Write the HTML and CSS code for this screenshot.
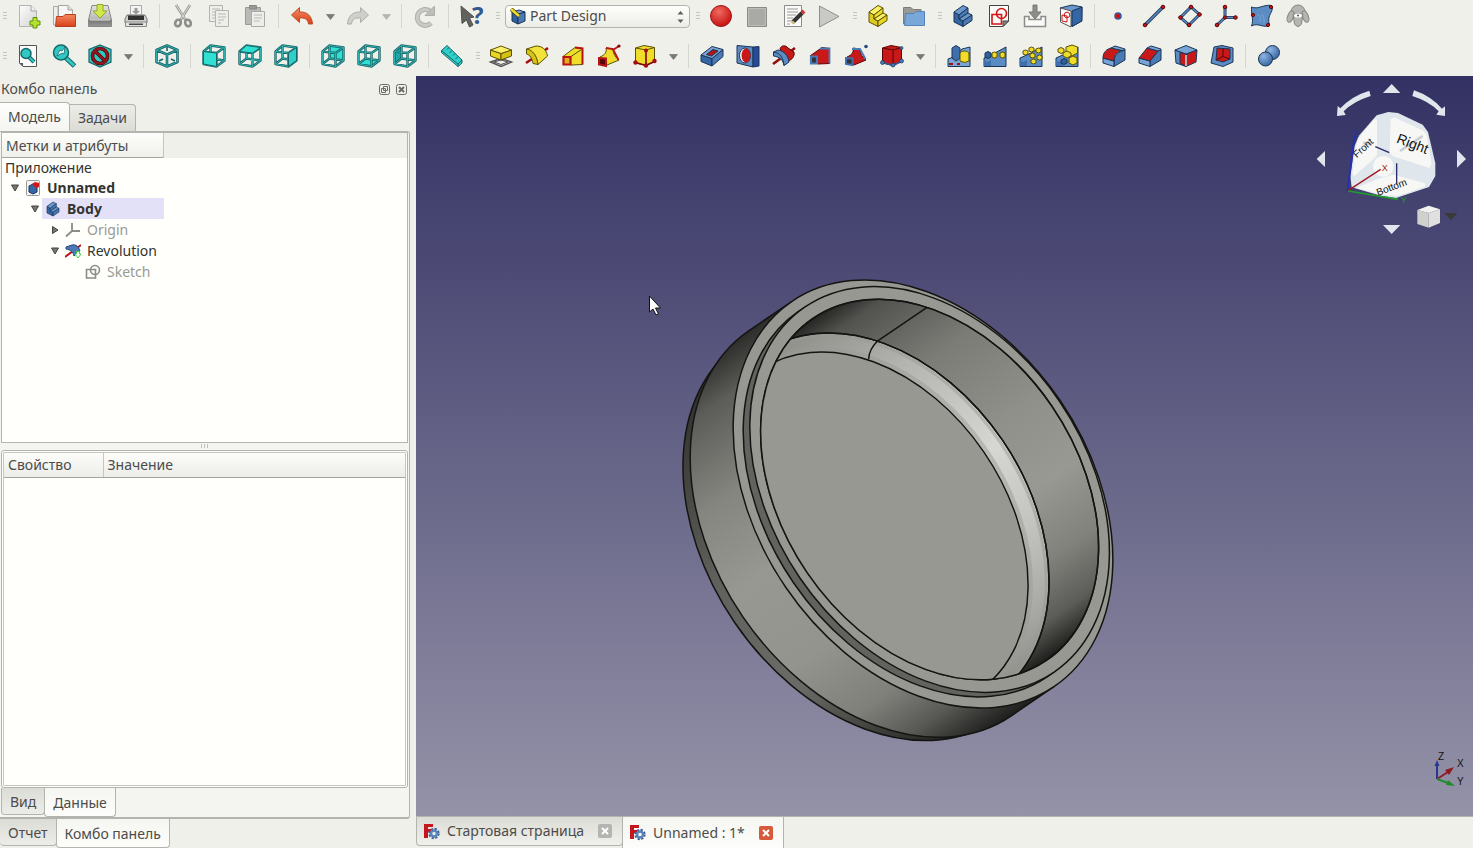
FILE: index.html
```html
<!DOCTYPE html>
<html lang="ru">
<head>
    <meta charset="UTF-8">
    <meta name="viewport" content="width=device-width, initial-scale=1.0">
    <title>FreeCAD</title>
    <link rel="stylesheet" href="styles.css">
</head>
<body>
    <!-- Shared icon shapes -->
    <svg class="defs" aria-hidden="true">
        <defs>
            <linearGradient id="paper" x1="0" y1="0" x2="1" y2="1"><stop offset="0" stop-color="#fdfdfd"/><stop offset="1" stop-color="#d3d3d0"/></linearGradient>
            <linearGradient id="orange" x1="0" y1="0" x2="0" y2="1"><stop offset="0" stop-color="#f58a60"/><stop offset="1" stop-color="#d8401a"/></linearGradient>
            <linearGradient id="drive" x1="0" y1="0" x2="0" y2="1"><stop offset="0" stop-color="#e4e4e2"/><stop offset=".65" stop-color="#b8b8b6"/><stop offset=".72" stop-color="#777"/><stop offset="1" stop-color="#999"/></linearGradient>
            <radialGradient id="ball" cx=".4" cy=".3" r=".7"><stop offset="0" stop-color="#f06a60"/><stop offset="1" stop-color="#c81212"/></radialGradient>
            <radialGradient id="blueball" cx=".35" cy=".3" r=".8"><stop offset="0" stop-color="#8fb6e2"/><stop offset="1" stop-color="#2f5f9c"/></radialGradient>
        </defs>
        <symbol id="wire" viewBox="0 0 24 24">
            <g fill="none" stroke-linejoin="round">
                <path d="M1.5 7.5 14.5 9V22.5L1.5 20ZM8.5 1.5 22.5 3.5V16.5L8.5 14.5ZM1.5 7.5 8.5 1.5M14.5 9 22.5 3.5M14.5 22.5 22.5 16.5M1.5 20 8.5 14.5" stroke="#17666a" stroke-width="2.4"/>
                <path d="M1.5 7.5 14.5 9V22.5L1.5 20ZM8.5 1.5 22.5 3.5V16.5L8.5 14.5ZM1.5 7.5 8.5 1.5M14.5 9 22.5 3.5M14.5 22.5 22.5 16.5M1.5 20 8.5 14.5" stroke="#2fb0ac" stroke-width="1"/>
            </g>
        </symbol>
        <symbol id="body" viewBox="0 0 24 24">
            <g stroke="#1a3557" stroke-linejoin="round">
                <path d="M3 8 8 11V15L12 17V22.5L3 18Z" fill="#3465a4"/>
                <path d="M3 8 12 1.5 17 4 8 11Z" fill="#6a98cb"/>
                <path d="M8 11 17 4V9L8 15Z" fill="#4a7ab4"/>
                <path d="M8 15 17 9 21 11 12 17Z" fill="#6a98cb"/>
                <path d="M12 17 21 11V16.5L12 22.5Z" fill="#4a7ab4"/>
            </g>
        </symbol>
        <symbol id="partyellow" viewBox="0 0 24 24">
            <g stroke="#5c5100" stroke-linejoin="round">
                <path d="M3 8 8 11V15L12 17V22.5L3 18Z" fill="#e0cb1c"/>
                <path d="M3 8 12 1.5 17 4 8 11Z" fill="#fbf06a"/>
                <path d="M8 11 17 4V9L8 15Z" fill="#f0dd2b"/>
                <path d="M8 15 17 9 21 11 12 17Z" fill="#fbf06a"/>
                <path d="M12 17 21 11V16.5L12 22.5Z" fill="#e8d423"/>
            </g>
        </symbol>
        <symbol id="cad" viewBox="0 0 17 17">
            <g fill="#c4161c">
                <rect x="1" y="1" width="4" height="14"/><rect x="5" y="1" width="5" height="3"/><rect x="5" y="6" width="3" height="3"/>
            </g>
            <circle cx="11" cy="10.5" r="4.2" fill="none" stroke="#3c5f95" stroke-width="3" stroke-dasharray="2 1.3"/>
            <circle cx="11" cy="10.5" r="3" fill="none" stroke="#5b83bb" stroke-width="2.5"/>
        </symbol>
        <symbol id="boxes" viewBox="0 0 24 24">
            <path d="M1 14 10 10 23 3V22.5H1Z" fill="#5c8cc4" stroke="#1a3557"/>
            <path d="M1 16 4 18 8 16V22H1Z" fill="#3f70ad"/>
        </symbol>
        <symbol id="down" viewBox="0 0 9 6"><path d="M.5 .5H8.5L4.5 5.5Z" fill="#7a7a76" stroke="#5d5d59" stroke-width=".5"/></symbol>
    </svg>

    <header class="toolbars">
        <div class="toolbar-row">
            <div class="toolbar">
                <span class="handle"></span>
                <button class="tool" aria-label="Создать"><svg viewBox="0 0 24 24"><path d="M3.5 1.5H15L20.5 7V22.5H3.5Z" fill="url(#paper)" stroke="#b4b4b0"/><path d="M15 1.5V7H20.5" fill="#eee" stroke="#a5a5a1"/><path d="M17 13.5H21V17H24V21H21V24H17V21H14V17H17Z" fill="#b6e32b" stroke="#5d8f09"/></svg></button>
                <button class="tool" aria-label="Открыть"><svg viewBox="0 0 24 24"><path d="M1.5 2.5H6V21H1.5Z" fill="#eee" stroke="#aaa"/><path d="M6.5 1.5H16L20.5 6V14H6.5Z" fill="#f6f6f4" stroke="#a5a5a1"/><path d="M16 1.5V6H20.5" fill="#ddd" stroke="#a5a5a1"/><path d="M4.5 12.5H11L13 10.5H23.5V22.5H3.5Z" fill="url(#orange)" stroke="#b8401d"/></svg></button>
                <button class="tool" aria-label="Сохранить"><svg viewBox="0 0 24 24"><path d="M4 1.5H20L23.5 16V22.5H.5V16Z" fill="url(#drive)" stroke="#888"/><path d="M2 16H22" stroke="#ddd"/><path d="M9 .5H15V7H19L12 14 5 7H9Z" fill="#cfe84a" stroke="#9aa828"/></svg></button>
                <button class="tool" aria-label="Печать"><svg viewBox="0 0 24 24"><path d="M6.5 1.5H17.5V12H6.5Z" fill="#f3f3f1" stroke="#aaa"/><path d="M10.5 4H13.5V7H16L12 10.5 8 7H10.5Z" fill="#999"/><path d="M3 11H21L23 15V19H1V15Z" fill="#d0d0ce" stroke="#777"/><path d="M4 11.5H20V16H4Z" fill="#333"/><path d="M1.500 18H22.500V22.500H1.500Z" fill="#e4e4e2" stroke="#888"/><path d="M5 19.500H19V21H5Z" fill="#444"/></svg></button>
                <span class="sep"></span>
                <button class="tool" aria-label="Вырезать"><svg viewBox="0 0 24 24"><path d="M5 1 14.5 16M19 1 9.5 16" stroke="#9a9a97" stroke-width="2.600"/><path d="M5 1 14 15M19 1 10 15" stroke="#dadad7"/><g fill="none" stroke="#8d8d8a" stroke-width="2.600"><ellipse cx="7" cy="19" rx="2.700" ry="3.400" transform="rotate(25 7 19)"/><ellipse cx="17" cy="19" rx="2.700" ry="3.400" transform="rotate(-25 17 19)"/></g></svg></button>
                <button class="tool" aria-label="Копировать"><svg viewBox="0 0 24 24"><g fill="#ededea" stroke="#b3b3af"><path d="M2.5 1.5H15.5V17.5H2.5Z"/><path d="M8.5 6.5H21.5V22.5H8.5Z"/></g><path d="M5 5H13M5 8H8M5 11H8M5 14H8M11 10H19M11 13H19M11 16H17M11 19H14" stroke="#b9b9b5"/></svg></button>
                <button class="tool" aria-label="Вставить"><svg viewBox="0 0 24 24"><path d="M2.5 3.5H17.5V20.5H2.5Z" fill="#b9b9b6" stroke="#9b9b98"/><path d="M6.5 1.5H13.5V5H6.5Z" fill="#999" stroke="#888"/><path d="M8.5 7.5H21.5V22.5H8.5Z" fill="#ededea" stroke="#aaa"/><path d="M11 11H19M11 14H19M11 17H17" stroke="#b9b9b5"/></svg></button>
                <span class="sep"></span>
                <button class="tool" aria-label="Отменить"><svg viewBox="0 0 24 24"><path d="M1.5 11 9.5 3.5V8C17 7.5 22 12 22.5 20H18.5C18 15 14.5 13.5 9.5 14V18.5Z" fill="url(#orange)" stroke="#bd4d28"/></svg></button>
                <button class="drop" aria-label="Список отмен"><svg><use href="#down"/></svg></button>
                <button class="tool" aria-label="Повторить"><svg viewBox="0 0 24 24"><path d="M22.5 11 14.5 3.5V8C7 7.5 2 12 1.5 20H5.5C6 15 9.5 13.5 14.5 14V18.5Z" fill="#cfcfcb" stroke="#adada9"/></svg></button>
                <button class="drop faded" aria-label="Список повторов"><svg><use href="#down"/></svg></button>
                <span class="sep"></span>
                <button class="tool" aria-label="Обновить"><svg viewBox="0 0 24 24"><path d="M18 19A8 8 0 1 1 17 7" fill="none" stroke="#aeaeaa" stroke-width="5"/><path d="M18 19A8 8 0 1 1 17 7" fill="none" stroke="#c9c9c5" stroke-width="3"/><path d="M21.500 2V11.500H12Z" fill="#bdbdb9" stroke="#aeaeaa"/></svg></button>
                <span class="sep"></span>
                <button class="tool" aria-label="Что это?"><svg viewBox="0 0 24 24"><path d="M1 2 14 13 9.5 14 13 21 9.5 23 6.5 16 2 19.5Z" fill="#61615e" stroke="#50504e"/><text x="12" y="20" class="qmark">?</text></svg></button>
            </div>
            <div class="toolbar">
                <span class="handle"></span>
                <div class="workbench">
                    <svg class="wb-icon" viewBox="0 0 17 17"><path d="M2 4 8 6V16L2 13Z" fill="#2f5f9c" stroke="#1a3557"/><path d="M8 6 15 4V13L8 16Z" fill="#4a7ab4" stroke="#1a3557"/><path d="M2 4 9 2 15 4 8 6Z" fill="#79a5d6" stroke="#1a3557"/><path d="M1 1 9 8" stroke="#4d4300" stroke-width="4"/><path d="M1 1 9 8" stroke="#f0dd2b" stroke-width="2.500"/></svg>
                    <select aria-label="Верстак"><option>Part Design</option></select>
                    <svg class="wb-arrows" viewBox="0 0 7 12"><path d="M.5 3.5 3.5 0 6.5 3.5ZM.5 8.5 3.5 12 6.5 8.5Z" fill="#5d5d59"/></svg>
                </div>
            </div>
            <div class="toolbar">
                <span class="handle"></span>
                <button class="tool" aria-label="Запись макроса"><svg viewBox="0 0 24 24"><circle cx="12" cy="12" r="10.500" fill="url(#ball)" stroke="#9e1414"/></svg></button>
                <button class="tool" aria-label="Остановить запись"><svg viewBox="0 0 24 24"><path d="M2.5 3.5H21.5V22.5H2.5Z" fill="#a9a9a6" stroke="#8b8b88"/><path d="M3.5 4.5H20.5V21.5H3.5Z" fill="none" stroke="#bdbdba"/></svg></button>
                <button class="tool" aria-label="Макросы"><svg viewBox="0 0 24 24"><path d="M3.5 1.5H20.5V22.5H3.5Z" fill="#fafaf8" stroke="#8b8b88"/><path d="M6 5H17M6 8H17M6 11H15M6 14H12M6 17H11M6 20H9" stroke="#999"/><path d="M12 18 21 9" stroke="#333" stroke-width="4"/><path d="M21 9 23 7" stroke="#c33" stroke-width="4"/><path d="M11 19.500 13 17.500" stroke="#d8b878" stroke-width="3"/></svg></button>
                <button class="tool" aria-label="Выполнить макрос"><svg viewBox="0 0 24 24"><path d="M2.5 2 22 12.5 2.5 23Z" fill="#c9c9c6" stroke="#8f8f8c"/></svg></button>
            </div>
            <div class="toolbar">
                <span class="handle"></span>
                <button class="tool" aria-label="Создать деталь"><svg><use href="#partyellow"/></svg></button>
                <button class="tool" aria-label="Создать группу"><svg viewBox="0 0 24 24"><path d="M1.5 3.5H9L11 5.5H19V20H1.5Z" fill="#999996" stroke="#7c7c79"/><path d="M3.5 9.5H12L14 7.5H22.5V21.5H2.5Z" fill="#7aa7d9" stroke="#5683b8"/></svg></button>
            </div>
            <div class="toolbar">
                <span class="handle"></span>
                <button class="tool" aria-label="Создать тело"><svg><use href="#body"/></svg></button>
                <button class="tool" aria-label="Создать эскиз"><svg viewBox="0 0 24 24"><path d="M2.5 1.5H21.5V17L16 22.5H2.5Z" fill="#fafaf8" stroke="#444"/><path d="M16 22.5V17H21.5Z" fill="#888" stroke="#444"/><g fill="none" stroke="#d31616" stroke-width="1.600"><path d="M5 10.500H14.500V20H5Z"/><circle cx="14.500" cy="9.500" r="5"/></g></svg></button>
                <button class="tool" aria-label="Закрепить эскиз"><svg viewBox="0 0 24 24"><path d="M1.5 12.5H6V15.500H18V12.5H22.5V22.5H1.5Z" fill="#fafaf8" stroke="#8d8d8a" stroke-width="1.500"/><path d="M10 1H14V8H18L12 15 6 8H10Z" fill="#8d8d8a" stroke="#777"/></svg></button>
                <button class="tool" aria-label="Проверить эскиз"><svg viewBox="0 0 24 24"><path d="M1 4 13 1 23 3 22.5 17 13 22.5Z" fill="#6a98cb" stroke="#1a3557"/><path d="M13 7 23 3V17L13 22.5Z" fill="#3465a4" stroke="#1a3557"/><path d="M1.5 4 12 7V23L1.5 18Z" fill="#fafaf8" stroke="#555"/><g fill="none" stroke="#d31616"><path d="M3 11 8 12V18L3 17Z"/><circle cx="8" cy="11" r="2.800"/></g></svg></button>
                <span class="sep"></span>
                <button class="tool" aria-label="Точка"><svg viewBox="0 0 24 24"><circle cx="12" cy="12" r="3" fill="#cc1414" stroke="#3a5a9a" stroke-width="1.600"/></svg></button>
                <button class="tool" aria-label="Линия"><svg viewBox="0 0 24 24"><path d="M3 21 21 3" stroke="#1a3557" stroke-width="3.200"/><path d="M3 21 21 3" stroke="#5c8cc4" stroke-width="1.600"/><g fill="#cc1414" stroke="#5a0505"><circle cx="3" cy="21" r="1.800"/><circle cx="21" cy="3" r="1.800"/></g></svg></button>
                <button class="tool" aria-label="Плоскость"><svg viewBox="0 0 24 24"><path d="M13 3 21.500 10.500 11 21 2.500 13.500Z" fill="none" stroke="#1a3557" stroke-width="3"/><path d="M13 3 21.500 10.500 11 21 2.500 13.500Z" fill="none" stroke="#5c8cc4" stroke-width="1.400"/><g fill="#cc1414" stroke="#5a0505"><circle cx="13" cy="3" r="1.800"/><circle cx="21.500" cy="10.500" r="1.800"/><circle cx="11" cy="21" r="1.800"/><circle cx="2.500" cy="13.500" r="1.800"/></g></svg></button>
                <button class="tool" aria-label="Система координат"><svg viewBox="0 0 24 24"><path d="M11 3V13.500H21M11 13.500 3 21" fill="none" stroke="#1a3557" stroke-width="3"/><path d="M11 3V13.500H21M11 13.500 3 21" fill="none" stroke="#5c8cc4" stroke-width="1.400"/><g fill="#cc1414" stroke="#5a0505"><circle cx="11" cy="3" r="1.800"/><circle cx="11" cy="13.500" r="1.600"/><circle cx="21.500" cy="13.500" r="1.800"/><circle cx="3" cy="21" r="1.800"/></g></svg></button>
                <button class="tool" aria-label="Связующая форма"><svg viewBox="0 0 24 24"><path d="M1.500 3C8 6 14 0 21.500 1.500 25 8 16 10 19.500 21 14 25 8 18 1.500 22 4 16 1 10 1.500 3Z" fill="#5c8cc4" stroke="#1a3557"/><path d="M8 10Q12 13 10 18M12 10Q15 14 14 19" fill="none" stroke="#79a5d6"/><g fill="#cc1414" stroke="#5a0505"><circle cx="21" cy="3" r="1.600"/><circle cx="3" cy="11" r="1.600"/><circle cx="18" cy="21" r="1.600"/></g></svg></button>
                <button class="tool" aria-label="Клонировать"><svg viewBox="0 0 24 24"><g fill="#b4b4b1" stroke="#858582"><circle cx="12" cy="8" r="7"/><ellipse cx="4.500" cy="12.500" rx="2.800" ry="6" transform="rotate(20 4.500 12.500)"/><ellipse cx="19.500" cy="12.500" rx="2.800" ry="6" transform="rotate(-20 19.500 12.500)"/><path d="M7 10H17L15.500 20Q12 25 8.500 20Z"/></g><ellipse cx="12" cy="11.500" rx="3.800" ry="2" fill="#fff"/><circle cx="12" cy="11.500" r="1" fill="#555"/></svg></button>
            </div>
        </div>

        <div class="toolbar-row">
            <div class="toolbar">
                <span class="handle"></span>
                <button class="tool" aria-label="Показать всё"><svg viewBox="0 0 24 24"><path d="M3.5 1.5H20.5V22.5H7L3.5 19Z" fill="#fafaf8" stroke="#555"/><path d="M3.5 19H7V22.5Z" fill="#555"/><path d="M13 13 18 18" stroke="#17666a" stroke-width="4"/><path d="M13 13 18 18" stroke="#2fc9c2" stroke-width="2"/><circle cx="10" cy="9.500" r="5" fill="#2fc9c2" stroke="#17666a" stroke-width="1.500"/></svg></button>
                <button class="tool" aria-label="Показать выделенное"><svg viewBox="0 0 24 24"><path d="M13 13 22.500 22" stroke="#17666a" stroke-width="5"/><path d="M13 13 22 21.500" stroke="#2fc9c2" stroke-width="3"/><circle cx="9" cy="8.500" r="7.500" fill="#2fc9c2" stroke="#17666a" stroke-width="1.500"/><path d="M5 12 8 6 10 7 13 3 12 10 10 9Z" fill="#fff" stroke="#17666a" stroke-width=".8"/></svg></button>
                <button class="tool" aria-label="Стиль отображения"><svg viewBox="0 0 24 24"><path d="M12 1 23 5.500V18L12 23 1 18V5.500Z" fill="#2fc9c2" stroke="#17666a" stroke-width="1.200"/><circle cx="12" cy="12" r="7.500" fill="none" stroke="#3f0308" stroke-width="3.600"/><path d="M7 7 17 17" stroke="#3f0308" stroke-width="3.600"/><circle cx="12" cy="12" r="7.500" fill="none" stroke="#96141c" stroke-width="2.400"/><path d="M7 7 17 17" stroke="#96141c" stroke-width="2.400"/></svg></button>
                <button class="drop" aria-label="Стили"><svg><use href="#down"/></svg></button>
                <span class="sep"></span>
                <button class="tool" aria-label="Изометрия"><svg viewBox="0 0 24 24"><g fill="none" stroke-linejoin="round"><path d="M12 1.500 22.500 6V18L12 22.500 1.500 18V6ZM1.500 6 12 10.500 22.500 6M12 10.500V22.500" stroke="#17666a" stroke-width="2.600"/><path d="M12 3V7M4 17 8 15M20 17 16 15" stroke="#17666a" stroke-width="1.600"/><path d="M12 1.500 22.500 6V18L12 22.500 1.500 18V6ZM1.500 6 12 10.500 22.500 6M12 10.500V22.500" stroke="#2fb0ac"/></g></svg></button>
                <span class="sep"></span>
                <button class="tool" aria-label="Спереди"><svg viewBox="0 0 24 24"><use href="#wire"/><path d="M1.5 7.5 14.5 9V22.5L1.5 20Z" fill="#2fe0d3" stroke="#17666a"/></svg></button>
                <button class="tool" aria-label="Сверху"><svg viewBox="0 0 24 24"><use href="#wire"/><path d="M1.5 7.5 8.5 1.5 22.5 3.5 14.5 9Z" fill="#2fe0d3" stroke="#17666a"/></svg></button>
                <button class="tool" aria-label="Справа"><svg viewBox="0 0 24 24"><use href="#wire"/><path d="M14.5 9 22.5 3.5V16.5L14.5 22.5Z" fill="#2fd0c8" stroke="#17666a"/></svg></button>
                <span class="sep"></span>
                <button class="tool" aria-label="Сзади"><svg viewBox="0 0 24 24"><path d="M8.5 1.5 22.5 3.5V16.5L8.5 14.5Z" fill="#2fe0d3"/><use href="#wire"/></svg></button>
                <button class="tool" aria-label="Снизу"><svg viewBox="0 0 24 24"><path d="M1.5 20 8.5 14.5 22.5 16.5 14.5 22.5Z" fill="#2fe0d3"/><use href="#wire"/></svg></button>
                <button class="tool" aria-label="Слева"><svg viewBox="0 0 24 24"><path d="M1.5 7.5 8.5 1.5V14.5L1.5 20Z" fill="#22a8a4"/><use href="#wire"/></svg></button>
                <span class="sep"></span>
                <button class="tool" aria-label="Измерить"><svg viewBox="0 0 24 24"><path d="M1.500 6.500 7 1.500 22 16V19L18 22.500 1.500 8.500Z" fill="#2fd0c8" stroke="#17666a"/><path d="M1.500 6.500 18 20 22 16M18 20V22.500" fill="none" stroke="#17666a"/><path d="M9 3.500 7 5.500M12 6.500 9.500 9M15 9.500 13 11.500M18 12.500 15.500 15" stroke="#17666a"/></svg></button>
            </div>
            <div class="toolbar">
                <span class="handle"></span>
                <button class="tool" aria-label="Выдавливание"><svg viewBox="0 0 24 24"><path d="M1.500 18 12 14.500 22.500 18 12 22.500Z" fill="#ddd" stroke="#555" stroke-width="1.400"/><path d="M5 18 12 16 19 18 12 20.500Z" fill="#f0f0eb" stroke="#555"/><path d="M1.500 6 12 9.500V16L1.500 12Z" fill="#e8d423" stroke="#5c5100"/><path d="M12 9.500 22.500 6V12L12 16Z" fill="#d6c214" stroke="#5c5100"/><path d="M1.500 6 12 2 22.500 6 12 9.500Z" fill="#fbf06a" stroke="#5c5100"/></svg></button>
                <button class="tool" aria-label="Вращение"><svg viewBox="0 0 24 24"><path d="M1 19 23 4" stroke="#a30d0d" stroke-width="2.500"/><path d="M1.500 5 11 2C17 2 21 5 22.500 12L13 20.500C12 13 8 8 1.500 7Z" fill="#f3e23a" stroke="#5c5100"/><path d="M1.500 5C8 6 12 12 13 20.500L8 19.500C7 14 5 11 1.500 10Z" fill="#d6c214" stroke="#5c5100"/></svg></button>
                <button class="tool" aria-label="Профиль"><svg viewBox="0 0 24 24"><path d="M2 12.500 14 3.500 21.500 4.500V20.500L10 21Z" fill="#f0dd2b" stroke="#5c5100"/><path d="M14 3.500 21.500 4.500V20.500" fill="none" stroke="#b81414" stroke-width="2"/><path d="M2.500 13H9.500V20.500H2.500Z" fill="#e0b01c" stroke="#b81414" stroke-width="2.200"/><path d="M10 12.500 20.500 5.500" stroke="#5c5100"/></svg></button>
                <button class="tool" aria-label="Протягивание"><svg viewBox="0 0 24 24"><path d="M3 13C8 11 10 8 9 4L16 5C16 10 19 14 22 16L10 21Z" fill="#f0dd2b" stroke="#5c5100"/><path d="M9 4 16 5 21.500 16M16 6 22 2" fill="none" stroke="#b81414" stroke-width="1.800"/><circle cx="22" cy="2" r="1.600" fill="#7a0707"/><path d="M2 14 9 14.500V22L2 20.500Z" fill="#5a0505" stroke="#b81414" stroke-width="2"/></svg></button>
                <button class="tool" aria-label="Примитив"><svg viewBox="0 0 24 24"><path d="M2.5 4 11 1.5 21.5 3.5V17.5L13 21.500 2.5 19Z" fill="#f0dd2b" stroke="#5c5100"/><path d="M2.5 4 13 6 21.5 3.5" fill="none" stroke="#5c5100"/><path d="M13 6V21.500M2.5 18.500 13 21.500 21.5 17.500" fill="none" stroke="#7a0707" stroke-width="1.600"/><g fill="#a30d0d"><circle cx="13" cy="6.500" r="2"/><circle cx="2.500" cy="18.500" r="2.200"/><circle cx="13" cy="21.500" r="2.200"/><circle cx="21.500" cy="17" r="2.200"/></g></svg></button>
                <button class="drop" aria-label="Примитивы"><svg><use href="#down"/></svg></button>
                <span class="sep"></span>
                <button class="tool" aria-label="Карман"><svg viewBox="0 0 24 24"><g stroke="#1a3557" stroke-linejoin="round"><path d="M1 11 12 14.500V22L1 17.500Z" fill="#3465a4"/><path d="M12 14.500 23 5.500V12.500L12 22Z" fill="#4a7ab4"/><path d="M1 11 12 2.500 23 5.500 12 14.500Z" fill="#79a5d6"/><path d="M6.500 10.500 13 5.500 18 7 11.500 12Z" fill="#b51414"/></g></svg></button>
                <button class="tool" aria-label="Отверстие"><svg viewBox="0 0 24 24"><path d="M1 1.500 17 3V23L1 19Z" fill="#5c8cc4" stroke="#1a3557"/><path d="M17 3 23 2.500V22L17 23Z" fill="#26499a" stroke="#1a3557"/><ellipse cx="9" cy="11.500" rx="5.500" ry="7.500" fill="#fff" stroke="#1a3557"/><ellipse cx="10" cy="11.500" rx="4.500" ry="7" fill="#c81818"/></svg></button>
                <button class="tool" aria-label="Проточка"><svg viewBox="0 0 24 24"><path d="M1 20 23 4" stroke="#8f0d0d" stroke-width="2.500"/><path d="M8 5C9 1 14 1 16 4L22 8C23 12 20 16 16 17Z" fill="#c81818" stroke="#5a0505"/><path d="M1.500 8 6 6C12 7 16 11 17 18L12 21.500C11 16 8 13 1.500 12Z" fill="#5c8cc4" stroke="#1a3557"/><path d="M1.500 8C8 9 11 13 12 21.500" fill="none" stroke="#1a3557"/></svg></button>
                <button class="tool" aria-label="Вычитание профиля"><svg viewBox="0 0 24 24"><path d="M2 12 14 3.500 21.500 4.500V19.500L10 20Z" fill="#c81818" stroke="#5a0505"/><path d="M12 4.500 21.500 4.500V19.500" fill="none" stroke="#4a7ab4" stroke-width="1.800"/><path d="M3 12.500H9V19.500H3Z" fill="#333" stroke="#4a7ab4" stroke-width="2.200"/></svg></button>
                <button class="tool" aria-label="Вычитание протягиванием"><svg viewBox="0 0 24 24"><path d="M3 13C8 11 10 8 9 4L16 5C16 10 19 14 22 16L10 21Z" fill="#c81818" stroke="#5a0505"/><path d="M8 5 16 5 21.500 15" fill="none" stroke="#4a7ab4" stroke-width="1.800"/><circle cx="22" cy="2.500" r="1.800" fill="#26477d"/><path d="M2 14 8.500 14.500V21L2 20Z" fill="#333" stroke="#3f70ad" stroke-width="2"/></svg></button>
                <button class="tool" aria-label="Вычитание примитива"><svg viewBox="0 0 24 24"><path d="M2.5 4 11 1.5 21.5 3.5V17.5L13 21.500 2.5 19Z" fill="#c81818" stroke="#5a0505"/><path d="M2.5 4 13 6 21.5 3.5M13 6V21.500" fill="none" stroke="#5a0505"/><path d="M2.5 18.500 13 21.500 21.5 17.500" fill="none" stroke="#2f5f9c" stroke-width="1.400"/><g fill="#4a7ab4" stroke="#1a3557" stroke-width=".7"><circle cx="2.500" cy="18.500" r="2"/><circle cx="13" cy="21" r="2"/><circle cx="21.500" cy="17" r="2"/><circle cx="21.500" cy="4" r="1.500"/></g></svg></button>
                <button class="drop" aria-label="Вычитаемые примитивы"><svg><use href="#down"/></svg></button>
                <span class="sep"></span>
                <button class="tool" aria-label="Симметрия"><svg viewBox="0 0 24 24"><path d="M1 15 9 12 15 5 23 3V22.500H1Z" fill="#79a5d6" stroke="#1a3557"/><path d="M5 4 9 1.500 13 4V14L9 17 5 14Z" fill="#3f70ad" stroke="#1a3557"/><path d="M13 10C13 6 22 6 22 10V17Q18 20 13 17Z" fill="#f0dd2b" stroke="#5c5100"/><path d="M2 20H6M10 20H13" stroke="#a30d0d" stroke-width="2"/></svg></button>
                <button class="tool" aria-label="Линейный массив"><svg viewBox="0 0 24 24"><use href="#boxes"/><path d="M2 9 5 7.500 8 9V13L5 14.500 2 13Z" fill="#2f5f9c" stroke="#1a3557"/><g fill="#f0dd2b" stroke="#5c5100"><path d="M9 9 11.500 8 14 9V13L11.500 14 9 13Z"/><path d="M17 9 19.500 8 22 9V13L19.500 14 17 13Z"/></g></svg></button>
                <button class="tool" aria-label="Круговой массив"><svg viewBox="0 0 24 24"><use href="#boxes"/><g fill="#f0dd2b" stroke="#5c5100"><path d="M4 7 6.500 6 9 7V10L6.500 11 4 10Z"/><path d="M10 4 12.500 3 15 4V7L12.500 8 10 7Z"/><path d="M17 5 19.500 4 22 5V8L19.500 9 17 8Z"/><path d="M11 10 13.500 9 16 10V13L13.500 14 11 13Z"/><path d="M18 12 20.500 11 23 12V15L20.500 16 18 15Z"/><path d="M12 16 14.500 15 17 16V19L14.500 20 12 19Z"/></g></svg></button>
                <button class="tool" aria-label="Множественное преобразование"><svg viewBox="0 0 24 24"><use href="#boxes"/><g fill="#f0dd2b" stroke="#5c5100"><path d="M3 5 6 3.500 9 5V8L6 9.500 3 8Z"/><path d="M11 3 17 1 22.500 3V9L17 12 11 9Z"/><path d="M8 9 12 7 16 9V12L12 14 8 12Z"/><path d="M14 14 18 12 22 14V19L18 21 14 19Z"/></g><path d="M6 16 9 14.500 12 16V19L9 20.500 6 19Z" fill="#2f5f9c" stroke="#1a3557"/></svg></button>
                <span class="sep"></span>
                <button class="tool" aria-label="Скругление"><svg viewBox="0 0 24 24"><g stroke="#1a3557" stroke-linejoin="round"><path d="M12 22.500V17C12 12 16 8 23 6V16Z" fill="#4a7ab4"/><path d="M1 14 12 17V22.500L1 19Z" fill="#79a5d6"/><path d="M1 14C1 8 5 5 9 4L20 6.500C14 8 12 12 12 17Z" fill="#c81818"/><path d="M9 4 13 2 23 5V6L20 6.500Z" fill="#79a5d6"/></g></svg></button>
                <button class="tool" aria-label="Фаска"><svg viewBox="0 0 24 24"><g stroke="#1a3557" stroke-linejoin="round"><path d="M12 22.500V17L20 7 23 6V16Z" fill="#4a7ab4"/><path d="M1 14 12 17V22.500L1 19Z" fill="#79a5d6"/><path d="M1 14 9 4 20 7 12 17Z" fill="#c81818"/><path d="M9 4 13 2 23 5V6L20 7Z" fill="#79a5d6"/></g></svg></button>
                <button class="tool" aria-label="Уклон"><svg viewBox="0 0 24 24"><g stroke="#1a3557" stroke-linejoin="round"><path d="M1 6 12 10V22.500L2 19Z" fill="#5c8cc4"/><path d="M12 10 23 6 22 18 12 22.500Z" fill="#c81818"/><path d="M6 8.500 12 10V22L6 19.500Z" fill="#c81818"/><path d="M1 6 12 1.500 23 6 12 10Z" fill="#79a5d6"/></g><path d="M12 11V22" stroke="#ddd" stroke-width="1.500"/></svg></button>
                <button class="tool" aria-label="Толщина"><svg viewBox="0 0 24 24"><g stroke="#1a3557" stroke-linejoin="round"><path d="M4 3 12 1.500 23 4V18L13 22.500 1 19Z" fill="#5c8cc4"/><path d="M7 4 20 5V15L13 18 6 16Z" fill="#c81818"/><path d="M13 4.500V12.500L6 16M13 12.500 20 15" fill="none" stroke="#5a0505"/></g></svg></button>
                <span class="sep"></span>
                <button class="tool" aria-label="Булева операция"><svg viewBox="0 0 24 24"><g fill="url(#blueball)" stroke="#1c3558"><circle cx="15.500" cy="8.500" r="7"/><circle cx="8.500" cy="15" r="7"/></g></svg></button>
            </div>
        </div>
    </header>

    <div class="workspace">
        <aside class="dock">
            <div class="dock-title">
                <span>Комбо панель</span>
                <button class="dock-btn" aria-label="Открепить"><svg viewBox="0 0 11 11"><rect x=".5" y=".5" width="10" height="10" rx="2"/><path d="M4.5 2.5H8.5V6.5H4.5ZM2.5 4.5H6.5V8.5H2.5Z"/></svg></button>
                <button class="dock-btn" aria-label="Закрыть панель"><svg viewBox="0 0 11 11"><rect x=".5" y=".5" width="10" height="10" rx="2"/><path class="cross" d="M3 3 8 8M8 3 3 8"/></svg></button>
            </div>
            <div class="tabs top">
                <button class="tab active">Модель</button>
                <button class="tab">Задачи</button>
            </div>
            <div class="pane">
                <div class="tree">
                    <div class="tree-header"><span>Метки и атрибуты</span></div>
                    <ul>
                        <li class="root">Приложение</li>
                        <li class="level1 bold"><svg class="arrow" viewBox="0 0 8 8"><path d="M.5 1H7.5L4 7Z"/></svg><svg class="item-icon" viewBox="0 0 16 16"><rect x="1.500" y=".5" width="13" height="15" rx="1" fill="#f4f4f2" stroke="#999"/><path d="M4 6 8 4 12 6V12L8 14 4 12Z" fill="#3465a4" stroke="#1a3557"/><path d="M7 4 10 2 14 3V7L11 8Z" fill="#d31616"/></svg><span class="label">Unnamed</span></li>
                        <li class="level2 bold"><svg class="arrow" viewBox="0 0 8 8"><path d="M.5 1H7.5L4 7Z"/></svg><span class="selected"><svg class="item-icon"><use href="#body"/></svg><span class="label">Body</span></span></li>
                        <li class="level3 hidden-item"><svg class="arrow" viewBox="0 0 8 8"><path d="M1.5 .5V7.5L7 4Z"/></svg><svg class="item-icon" viewBox="0 0 16 16"><path d="M7 1V9H15M7 9 1 14.500" fill="none" stroke="#8b8b88" stroke-width="1.800"/></svg><span class="label">Origin</span></li>
                        <li class="level3"><svg class="arrow" viewBox="0 0 8 8"><path d="M.5 1H7.5L4 7Z"/></svg><svg class="item-icon" viewBox="0 0 16 16"><path d="M0 14 16 2" stroke="#b81414" stroke-width="2"/><path d="M1 4 7 2C11 1 14 4 15 8L9 13C8 9 6 7 1 6Z" fill="#4a7ab4" stroke="#26477d"/><path d="M11.500 8.500H14.500V11H16L13 15 10 11H11.500Z" fill="#fff" stroke="#3fd53f"/></svg><span class="label">Revolution</span></li>
                        <li class="level4 hidden-item"><svg class="item-icon" viewBox="0 0 16 16"><g fill="none" stroke="#8b8b88" stroke-width="1.600"><path d="M1.500 5.500H10.500V14H1.500Z"/><circle cx="10" cy="6" r="4.500"/></g></svg><span class="label">Sketch</span></li>
                    </ul>
                </div>
                <div class="splitter"><i></i><i></i><i></i></div>
                <div class="properties">
                    <table>
                        <thead><tr><th class="name">Свойство</th><th>Значение</th></tr></thead>
                    </table>
                </div>
                <div class="tabs bottom">
                    <button class="tab">Вид</button>
                    <button class="tab active">Данные</button>
                </div>
            </div>
            <div class="tabs bottom outer">
                <button class="tab">Отчет</button>
                <button class="tab active">Комбо панель</button>
            </div>
        </aside>

        <main class="mdi">
            <div class="view3d">
                <svg class="model" viewBox="0 0 1057 740" preserveAspectRatio="xMidYMid meet">
                    <defs>
                        <linearGradient id="outer" gradientUnits="userSpaceOnUse" x1="-233" y1="0" x2="233" y2="0">
                            <stop offset="0" stop-color="#2c2c2a"/><stop offset=".09" stop-color="#5c5c58"/><stop offset=".27" stop-color="#868681"/><stop offset=".45" stop-color="#989893"/><stop offset=".65" stop-color="#94948f"/><stop offset=".81" stop-color="#80807b"/><stop offset=".91" stop-color="#585855"/><stop offset="1" stop-color="#1e1e1c"/>
                        </linearGradient>
                        <linearGradient id="edge" gradientUnits="userSpaceOnUse" x1="-228" y1="0" x2="228" y2="0">
                            <stop offset="0" stop-color="#2c2c2a"/><stop offset=".4" stop-color="#60605c"/><stop offset=".7" stop-color="#6a6a66"/><stop offset="1" stop-color="#1e1e1c"/>
                        </linearGradient>
                        <linearGradient id="inner" gradientUnits="userSpaceOnUse" x1="-208" y1="0" x2="208" y2="0">
                            <stop offset="0" stop-color="#242422"/><stop offset=".06" stop-color="#52524f"/><stop offset=".24" stop-color="#7c7c77"/><stop offset=".46" stop-color="#90908b"/><stop offset=".64" stop-color="#999994"/><stop offset=".8" stop-color="#82827d"/><stop offset=".92" stop-color="#5c5c58"/><stop offset="1" stop-color="#1c1c1a"/>
                        </linearGradient>
                        <linearGradient id="fillet" gradientUnits="userSpaceOnUse" x1="-208" y1="0" x2="208" y2="0">
                            <stop offset="0" stop-color="#8e8e89"/><stop offset=".22" stop-color="#b4b4b0"/><stop offset=".5" stop-color="#d6d6d2"/><stop offset=".7" stop-color="#c4c4c0"/><stop offset=".88" stop-color="#a9a9a5"/><stop offset="1" stop-color="#8e8e89"/>
                        </linearGradient>
                        <clipPath id="opening"><ellipse cy="-8" rx="207" ry="148"/></clipPath>
                    </defs>
                    <!-- x runs along the long axis of the rim, y goes into the part -->
                    <g transform="translate(507 418) rotate(55.7)" stroke="#141412" stroke-width="1.500" fill="none">
                        <ellipse cy="66" rx="228" ry="162" fill="url(#edge)"/>
                        <path d="M-233 0V52A233 166 0 0 0 233 52V0" fill="url(#outer)"/>
                        <ellipse rx="233" ry="166" fill="#989893"/>
                        <ellipse rx="221" ry="157" fill="#62625e"/>
                        <ellipse cy="-8" rx="221" ry="157" fill="#989893"/>
                        <ellipse cy="-8" rx="207" ry="148" fill="url(#inner)"/>
                        <g clip-path="url(#opening)">
                            <ellipse cy="52" rx="207" ry="148" fill="url(#fillet)"/>
                            <!-- shading across the fillet -->
                            <ellipse cy="53" rx="205" ry="146" stroke="#9a9a95" stroke-width="3" stroke-opacity=".5"/>
                            <ellipse cy="63" rx="196" ry="140" stroke="#9a9a95" stroke-width="4" stroke-opacity=".5"/>
                            <ellipse cy="52" rx="207" ry="148"/>
                            <ellipse cy="64" rx="194" ry="138" fill="#989893"/>
                            <path d="M-152 -109V-49Q-150 -37 -142 -31"/>
                        </g>
                        <ellipse cy="-8" rx="207" ry="148"/>
                    </g>
                    <path class="cursor" d="M233.5 220V236L237 233 240 239 242.5 238 239.5 232H244.5Z"/>
                </svg>

                <svg class="navcube" viewBox="0 0 489 495">
                    <g fill="#dfe7ec">
                        <path d="M219 51 245 24 271 51ZM219 447H271L245 474ZM45 225V273L20 249ZM441 221V275L468 249Z"/>
                        <path d="M178 44 182 60Q130 76 101 106L107 117 81 120 83 90 91 97Q125 60 178 44ZM312 43 307 60Q358 76 386 106L379 116 405 120 405 91 396 98Q362 60 312 43Z"/>
                        <path d="M200 118 235 108 264 111 338 146 354 168 376 262 376 300 357 333 258 366 215 360 125 334 121 300 134 210 146 180Z"/>
                    </g>
                    <g fill="#f7f8f6">
                        <path d="M148 184 192 130 201 132 201 236 190 250 133 300 127 292 138 208Z"/>
                        <path d="M242 130 252 124 340 164 350 176 364 262 358 276 248 240 239 230Z"/>
                        <path d="M200 310 250 296 345 322 345 332 262 360 215 356 140 336Z"/>
                        <circle cx="220" cy="271" r="31"/>
                    </g>
                    <path d="M270 225 338 180M160 200 185 206" stroke="#c9cdd0" stroke-width="8"/>
                    <path d="M196 212 238 230M260 262V325" stroke="#2a2a68" stroke-width="4"/>
                    <g class="face-names">
                        <text class="face-right" transform="translate(257 199) rotate(21)">Right</text>
                        <text class="face-front" transform="translate(140 247) rotate(-42)">Front</text>
                        <text class="face-bottom" transform="translate(204 360) rotate(-21)">Bottom</text>
                    </g>
                    <path d="M113 345 133 182" stroke="#2430b0" stroke-width="6"/>
                    <path d="M115 343 212 280" stroke="#a01822" stroke-width="4"/>
                    <path d="M115 345 264 370" stroke="#1f9d2c" stroke-width="5"/>
                    <g class="axis-names"><text x="215" y="284" fill="#a01822">X</text><text x="272" y="381" fill="#1f9d2c">Y</text><text x="130" y="182" fill="#2430b0">Z</text></g>
                    <path d="M322 402 356 411V455L322 444Z" fill="#d0d0ce"/><path d="M356 411 390 400V441L356 455Z" fill="#e0e0de"/><path d="M322 402 356 389 390 400 356 411Z" fill="#f2f2f0"/>
                    <path d="M404 411H442L423 433Z" fill="#3a3a3c"/>
                </svg>

                <svg class="axes" viewBox="0 0 36 40">
                    <path d="M5 28V12" stroke="#26388f" stroke-width="2"/><path d="M2.5 15 5 9 7.5 15Z" fill="#26388f"/>
                    <path d="M5 28 16 21" stroke="#8f1b22" stroke-width="2"/><path d="M13 19 22 16 17 24Z" fill="#8f1b22"/>
                    <path d="M5 28 16 32" stroke="#238a2c" stroke-width="2"/><path d="M14 34 16 29 23 35Z" fill="#238a2c"/>
                    <g class="axes-names"><text x="6" y="9">Z</text><text x="25" y="16">X</text><text x="25" y="34">Y</text></g>
                </svg>
            </div>
            <div class="mdi-tabs">
                <div class="mdi-tab"><svg class="logo"><use href="#cad"/></svg><button class="mdi-name">Стартовая страница</button><button class="close" aria-label="Закрыть"><svg viewBox="0 0 14 14"><path d="M4 4 10 10M10 4 4 10"/></svg></button></div>
                <div class="mdi-tab active"><svg class="logo"><use href="#cad"/></svg><button class="mdi-name">Unnamed : 1*</button><button class="close" aria-label="Закрыть"><svg viewBox="0 0 14 14"><path d="M4 4 10 10M10 4 4 10"/></svg></button></div>
            </div>
        </main>
    </div>
</body>
</html>
```
FILE: styles.css
```css
* {
    box-sizing: border-box;
}
body {
    margin: 0;
    height: 100vh;
    display: flex;
    flex-direction: column;
    overflow: hidden;
    background-color: #f0f0eb;
    color: #4c4c4a;
    font-family: "Noto Sans", "Open Sans", sans-serif;
    font-size: 14px;
    line-height: 20px;
}
button {
    font: inherit;
    color: inherit;
    padding: 0;
    border: none;
    background: none;
}
.defs {
    position: absolute;
    width: 0;
    height: 0;
}

/* Toolbars */
.toolbars {
    display: flex;
    flex-direction: column;
    gap: 8px;
    padding-bottom: 4px;
}
.toolbar-row {
    display: flex;
    gap: 3px;
    height: 32px;
}
.toolbar {
    display: flex;
    align-items: center;
}
.handle {
    width: 4px;
    height: 8px;
    margin: 0 3px;
    background: repeating-linear-gradient(#c6c6c1 0 1px, transparent 1px 3px);
}
.tool {
    width: 36px;
    height: 32px;
    display: flex;
    align-items: center;
    justify-content: center;
}
.tool svg {
    width: 24px;
    height: 24px;
    overflow: visible;
}
.drop {
    width: 20px;
    height: 32px;
    display: flex;
    align-items: center;
    justify-content: center;
    padding-top: 2px;
}
.drop svg {
    width: 9px;
    height: 6px;
}
.drop.faded {
    opacity: 0.5;
}
.sep {
    width: 1px;
    height: 24px;
    margin: 0 5px;
    background-color: #d6d6d1;
}
.qmark {
    font: bold 24px "Noto Sans", sans-serif;
    fill: #35588f;
}
.workbench {
    position: relative;
    width: 185px;
    margin-left: 2px;
}
.workbench select {
    appearance: none;
    width: 100%;
    height: 23px;
    padding: 0 20px 0 24px;
    border: 1px solid #b4b4ae;
    border-radius: 4px;
    background: linear-gradient(#fefefc, #ecece7);
    color: inherit;
    font: inherit;
}
.wb-icon {
    position: absolute;
    left: 5px;
    top: 3px;
    width: 17px;
    height: 17px;
}
.wb-arrows {
    position: absolute;
    right: 6px;
    top: 6px;
    width: 7px;
    height: 12px;
}

/* Side panel */
.workspace {
    flex: 1;
    min-height: 0;
    display: flex;
    gap: 6px;
}
.dock {
    width: 410px;
    display: flex;
    flex-direction: column;
}
.dock-title {
    display: flex;
    align-items: center;
    gap: 6px;
    height: 26px;
    padding: 0 3px 0 1px;
}
.dock-title span {
    flex: 1;
}
.dock-btn {
    display: flex;
}
.dock-btn svg {
    width: 11px;
    height: 11px;
    fill: none;
    stroke: #6a6a67;
}
.dock-btn .cross {
    stroke-width: 2;
}
.tabs {
    display: flex;
}
.tab {
    padding: 0 8px;
    border: 1px solid #b4b4ae;
}
.tabs.top {
    align-items: flex-end;
    height: 29px;
}
.tabs.top .tab {
    height: 27px;
    border-bottom: none;
    border-left: none;
    border-radius: 0 4px 0 0;
    background: linear-gradient(#ecece8, #dcdcd7);
}
.tabs.top .tab.active {
    height: 29px;
    background: linear-gradient(#fdfdfb, #f5f5f1);
}
.tabs.bottom {
    align-items: flex-start;
    height: 29px;
}
.tabs.bottom .tab {
    height: 27px;
    padding-top: 2px;
    border-top: none;
    border-radius: 0 0 4px 4px;
    background: linear-gradient(#dcdcd7, #ecece8);
}
.tabs.bottom .tab.active {
    height: 29px;
    margin-left: -1px;
    background: linear-gradient(#f5f5f1, #fdfdfb);
}
.tabs.outer .tab:first-child {
    border-left: none;
}
.pane {
    flex: 1;
    min-height: 0;
    display: flex;
    flex-direction: column;
    padding: 0 1px;
    border: 1px solid #b4b4ae;
    border-left: none;
    border-bottom-width: 2px;
    border-radius: 0 3px 3px 0;
    background-color: #f4f4f0;
}
.tree {
    flex: 12 1 0;
    min-height: 0;
    overflow: hidden;
    border: 1px solid #b4b4ae;
    background-color: #fffffc;
}
.tree-header {
    height: 25px;
    background-color: #f0f0eb;
}
.tree-header span {
    display: block;
    width: 162px;
    height: 25px;
    padding: 3px 4px 0;
    border-right: 1px solid #c6c6c1;
    border-bottom: 1px solid #a5a5a0;
    background: linear-gradient(#fdfdfb, #f0f0eb);
}
.tree ul {
    list-style: none;
    margin: 0;
    padding: 0;
    color: #33332f;
}
.tree li {
    display: flex;
    align-items: center;
    width: 162px;
    height: 21px;
}
.tree .root {
    height: 19px;
    padding-left: 3px;
}
.level1 {
    padding-left: 9px;
}
.level2 {
    padding-left: 29px;
}
.level3 {
    padding-left: 49px;
}
.tree .level4 {
    padding-left: 83px;
}
.tree .bold {
    font-weight: bold;
}
.tree .hidden-item {
    color: #999994;
}
.arrow {
    width: 8px;
    height: 8px;
    margin-right: 6px;
    fill: #77776f;
    stroke: #444440;
}
.item-icon {
    width: 16px;
    height: 16px;
    flex: none;
    margin-right: 6px;
}
.selected {
    flex: 1;
    display: flex;
    align-items: center;
    height: 21px;
    margin-left: -3px;
    padding-left: 3px;
    background-color: #e3e1f8;
}
.splitter {
    display: flex;
    justify-content: center;
    align-items: center;
    gap: 2px;
    height: 7px;
}
.splitter i {
    width: 1px;
    height: 4px;
    background-color: #c0c0bb;
}
.properties {
    flex: 13 1 0;
    min-height: 0;
    padding: 1px;
    border: 1px solid #b4b4ae;
    border-radius: 3px;
    background-color: #fffffc;
    outline: 1px solid #c6c6c1;
    outline-offset: -3px;
}
.properties table {
    width: 100%;
    border-collapse: collapse;
}
.properties th {
    height: 26px;
    padding: 3px 4px 2px;
    border-bottom: 1px solid #a5a5a0;
    background: linear-gradient(#fdfdfb, #ecece8);
    font-weight: normal;
    text-align: left;
}
.properties .name {
    width: 100px;
    padding-left: 5px;
    border-right: 1px solid #c6c6c1;
}

/* 3D view */
.mdi {
    flex: 1;
    min-width: 0;
    display: flex;
    flex-direction: column;
}
.view3d {
    position: relative;
    flex: 1;
    min-height: 0;
    background: linear-gradient(#333163, #9593a8);
}
.model {
    display: block;
    width: 100%;
    height: 100%;
}
.cursor {
    fill: #fff;
    stroke: #111;
}
.navcube {
    position: absolute;
    top: 0;
    right: 0;
    width: 163px;
    height: 165px;
}
.face-names {
    font-family: "Liberation Sans", sans-serif;
    fill: #111;
}
.face-right {
    font-size: 42px;
}
.face-front {
    font-size: 30px;
}
.face-bottom {
    font-size: 30px;
}
.axis-names {
    font: 27px "Liberation Sans", sans-serif;
}
.axes {
    position: absolute;
    right: 5px;
    bottom: 25px;
    width: 36px;
    height: 40px;
}
.axes-names {
    font: 10px "Liberation Sans", sans-serif;
    fill: #111;
}
.mdi-tabs {
    display: flex;
    align-items: flex-start;
    height: 32px;
    border-top: 1px solid #b4b4ae;
}
.mdi-tab {
    display: flex;
    align-items: center;
    height: 29px;
    padding: 0 10px 0 6px;
    border: 1px solid #b4b4ae;
    border-top: none;
    border-radius: 0 0 4px 4px;
    background: linear-gradient(#dcdcd7, #f0f0ec);
}
.mdi-tab.active {
    height: 31px;
    margin-left: -1px;
    border-bottom: none;
    border-radius: 0;
    background: linear-gradient(#f5f5f1, #fdfdfb);
}
.logo {
    width: 17px;
    height: 17px;
    margin-right: 7px;
}
.close {
    display: flex;
    margin-left: 14px;
    border-radius: 2px;
    background-color: #b4b4b0;
}
.close svg {
    width: 14px;
    height: 14px;
    stroke: #fff;
    stroke-width: 2;
}
.active .close {
    background-color: #d5593a;
}
```
